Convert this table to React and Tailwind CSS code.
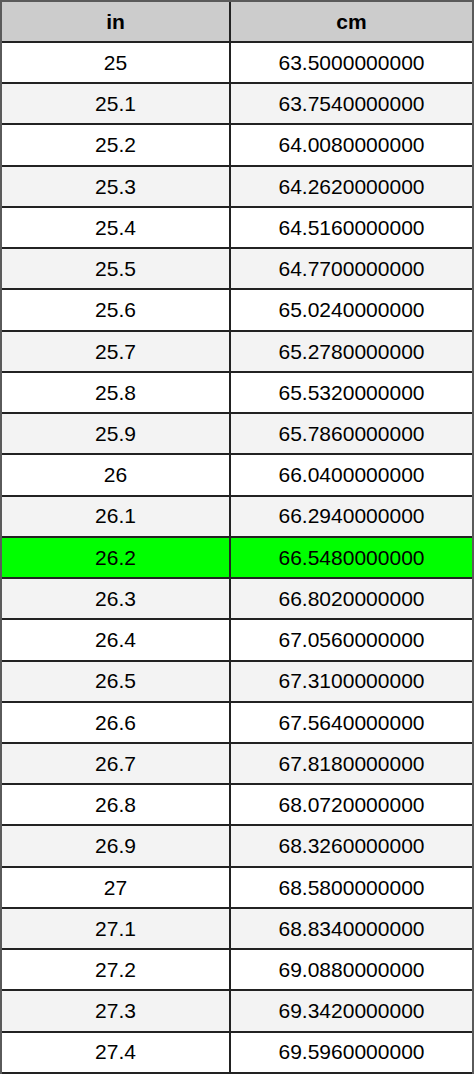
import React from "react";

const rows = [
  ["25", "63.5000000000"],
  ["25.1", "63.7540000000"],
  ["25.2", "64.0080000000"],
  ["25.3", "64.2620000000"],
  ["25.4", "64.5160000000"],
  ["25.5", "64.7700000000"],
  ["25.6", "65.0240000000"],
  ["25.7", "65.2780000000"],
  ["25.8", "65.5320000000"],
  ["25.9", "65.7860000000"],
  ["26", "66.0400000000"],
  ["26.1", "66.2940000000"],
  ["26.2", "66.5480000000"],
  ["26.3", "66.8020000000"],
  ["26.4", "67.0560000000"],
  ["26.5", "67.3100000000"],
  ["26.6", "67.5640000000"],
  ["26.7", "67.8180000000"],
  ["26.8", "68.0720000000"],
  ["26.9", "68.3260000000"],
  ["27", "68.5800000000"],
  ["27.1", "68.8340000000"],
  ["27.2", "69.0880000000"],
  ["27.3", "69.3420000000"],
  ["27.4", "69.5960000000"],
];

export default function App() {
  return (
    <div className="w-[474px] h-[1077px] bg-white" style={{ fontFamily: '"Liberation Sans", Arial, sans-serif' }}>
      <div className="border-t-2 border-x-2 border-[#5a5a5a]">
        <div className="grid grid-cols-[229px_1fr] h-[41px] border-b-2 border-[#222] bg-[#cccccc] text-[21px] font-bold text-black">
          <div className="flex items-center justify-center border-r-2 border-[#222]">in</div>
          <div className="flex items-center justify-center">cm</div>
        </div>
        {rows.map(([a, b], i) => {
          const bg = a === "26.2" ? "bg-[#00ff00]" : i % 2 === 0 ? "bg-white" : "bg-[#f3f3f3]";
          return (
            <div key={a} className={`grid grid-cols-[229px_1fr] h-[41.24px] border-b-2 border-[#222] text-[21px] text-black ${bg}`}>
              <div className="flex items-center justify-center border-r-2 border-[#222]">{a}</div>
              <div className="flex items-center justify-center">{b}</div>
            </div>
          );
        })}
      </div>
    </div>
  );
}
